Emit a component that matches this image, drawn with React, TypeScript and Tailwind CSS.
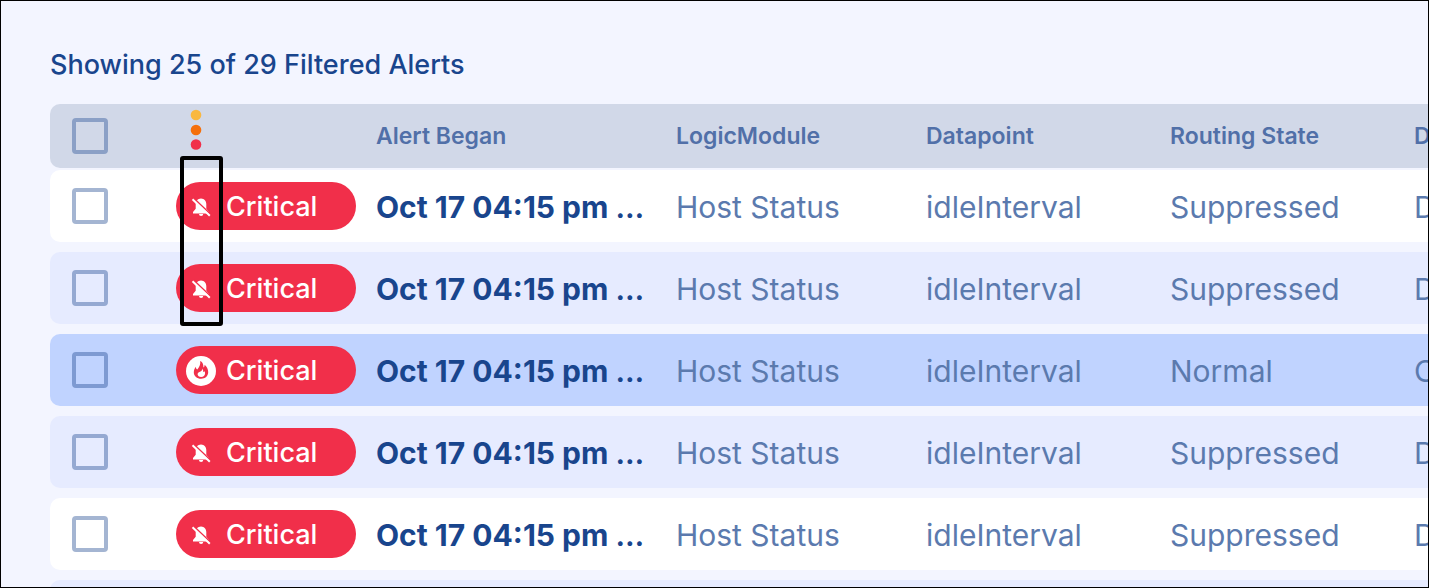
type Alert = {
  id: number;
  kind: "muted" | "active";
  severity: string;
  began: string;
  module: string;
  datapoint: string;
  routing: string;
  more: string;
};

const muted = {
  kind: "muted" as const,
  severity: "Critical",
  began: "Oct 17 04:15 pm",
  module: "Host Status",
  datapoint: "idleInterval",
  routing: "Suppressed",
  more: "D",
};

const alerts: Alert[] = [
  { id: 1, ...muted },
  { id: 2, ...muted },
  { id: 3, ...muted, kind: "active", routing: "Normal", more: "C" },
  { id: 4, ...muted },
  { id: 5, ...muted },
  { id: 6, ...muted },
];

const columns =
  "grid grid-cols-[126px_200px_300px_250px_244px_244px_1fr] items-center rounded-[10px]";

function rowColor(index: number, kind: Alert["kind"]) {
  if (kind === "active") return "bg-[#c0d3ff]";
  return index % 2 === 0 ? "bg-white" : "bg-[#e6ebff]";
}

function BellOff() {
  return (
    <svg viewBox="0 0 30 30" className="size-[30px]" aria-hidden="true">
      <path
        d="M15 6.600c3.300.2 5.300 2.600 5.300 5.600v4.500l2.700 3.200v1.500H7v-1.500l2.700-3.200v-4.500c0-3 2-5.400 5.300-5.600Z"
        fill="white"
      />
      <path d="M13 22h4.200a2.100 2.100 0 0 1-4.200 0Z" fill="white" />
      <path d="M7.500 6.200 25.400 23.200" stroke="#f12f4a" strokeWidth="1.600" />
      <path d="M6.500 7.200 23.800 23.700" stroke="white" strokeWidth="2" />
    </svg>
  );
}

function Flame() {
  return (
    <svg viewBox="0 0 30 30" className="size-[30px]" aria-hidden="true">
      <circle cx="15" cy="15" r="15" fill="white" />
      <path
        d="M14.200 5c3 1.500 3.200 4 3.200 6.500.9-.5 1.200-1.400 1.200-2.700 2.200 1.900 3.600 4.600 3.600 7.400 0 3.700-3.100 6.500-7.100 6.500s-7.300-2.700-7.300-6.300c0-2.300.9-4 2-5.600.1 1.300.5 2.200 1.500 2.600 1.800-2 3.500-4.700 2.900-8.400Z"
        fill="#f12f4a"
      />
      <path
        d="M16.600 12.600c-.2 1.500-.9 2.400-2.100 2.900-1.500.5-2.900 1.300-2.900 2.800 0 1.600 1.500 2.700 3.500 2.700 2.300 0 4-1.500 4-3.700 0-.8-.2-1.500-.6-2.100-.4.500-.8.700-1.300.7 0-1.100 0-2.200-.6-3.300Z"
        fill="white"
      />
    </svg>
  );
}

function Tick({ label, strong }: { label: string; strong?: boolean }) {
  return (
    <input
      type="checkbox"
      aria-label={label}
      className={
        strong
          ? "block size-9 appearance-none rounded-[4px] border-4 border-[#8ba0c6]"
          : "block size-9 appearance-none rounded-[4px] border-4 border-[#1b458f]/40"
      }
    />
  );
}

export default function App() {
  return (
    <main className="h-screen overflow-hidden border border-black bg-[#f3f5ff] pt-[44px] pl-[49px] font-['Inter',sans-serif] text-[#5b7aae]">
      <h1 className="mb-[19px] text-[27px] leading-10 font-medium text-[#19458d]">
        Showing 25 of 29 Filtered Alerts
      </h1>
      <table className="block w-full min-w-[1600px] text-left whitespace-nowrap">
        <thead className="mb-0.5 block">
          <tr className={`${columns} h-16 bg-[#d1d8e8] text-[23px] text-[#5170a8]`}>
            <th className="pl-[22px]">
              <Tick label="Select all alerts" strong />
            </th>
            <th>
              <svg viewBox="0 0 12 42" className="mb-3 ml-3.5 h-[42px] w-3" role="img" aria-label="Severity">
                <circle cx="6" cy="6" r="5.300" fill="#f9b840" />
                <circle cx="6" cy="21" r="5.300" fill="#f56f0a" />
                <circle cx="6" cy="35.500" r="5.300" fill="#f12f4a" />
              </svg>
            </th>
            <th className="font-semibold">Alert Began</th>
            <th className="font-semibold">LogicModule</th>
            <th className="font-semibold">Datapoint</th>
            <th className="font-semibold">Routing State</th>
            <th className="font-semibold">D</th>
          </tr>
        </thead>
        <tbody className="flex flex-col gap-2.5">
          {alerts.map((a, i) => (
            <tr key={a.id} className={`${columns} ${rowColor(i, a.kind)} relative h-[72px] text-[30px]`}>
              <td className="pl-[22px]">
                <Tick label={`Select alert ${a.id}`} />
              </td>
              <td>
                <span className="flex h-12 w-[180px] items-center gap-2.5 rounded-full bg-[#f12f4a] pt-0.5 pl-2.5 text-[27px] font-medium text-white">
                  {a.kind === "active" ? <Flame /> : <BellOff />}
                  {a.severity}
                </span>
                {i === 0 && (
                  <span className="absolute top-[-14px] left-[130px] z-10 h-[170px] w-[43px] rounded-[3px] border-4 border-black" />
                )}
              </td>
              <td className="pt-0.5 font-bold text-[#19458d]">
                {a.began} <span className="font-semibold">…</span>
              </td>
              <td className="pt-0.5">{a.module}</td>
              <td className="pt-0.5">{a.datapoint}</td>
              <td className="pt-0.5">{a.routing}</td>
              <td className="pt-0.5">{a.more}</td>
            </tr>
          ))}
        </tbody>
      </table>
    </main>
  );
}
